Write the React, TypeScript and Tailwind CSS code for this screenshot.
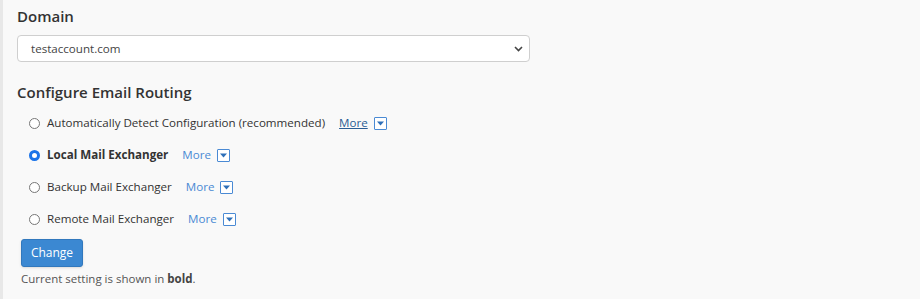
import React from "react";

function MoreIcon() {
  return (
    <span className="inline-flex items-center justify-center w-[13px] h-[13px] border-[1.5px] border-[#4a8ad4] bg-white rounded-[1px] ml-[6px]">
      <svg width="7" height="5" viewBox="0 0 7 5">
        <path d="M0 0.5 L7 0.5 L3.5 4.5 Z" fill="#2d6fb8" />
      </svg>
    </span>
  );
}

const rows = [
  { label: "Automatically Detect Configuration (recommended)", checked: false, dark: true },
  { label: "Local Mail Exchanger", checked: true, dark: false },
  { label: "Backup Mail Exchanger", checked: false, dark: false },
  { label: "Remote Mail Exchanger", checked: false, dark: false },
];

export default function App() {
  return (
    <div
      className="w-[920px] h-[299px] bg-[#f9f9f9] flex text-[#333]"
      style={{ fontFamily: '"Open Sans", sans-serif' }}
    >
      <div className="w-[3px] bg-[#e8e8e8]" />
      <div className="pl-[14px] pt-[5px] flex flex-col">
        <h2 className="text-[15px] font-semibold leading-[22px]">Domain</h2>
        <div className="mt-[8px] w-[513px] h-[27px] bg-white border border-[#cfcfcf] rounded-[4px] flex items-center justify-between pl-[13px] pr-[6px]">
          <span className="text-[11.6px] text-[#444]">testaccount.com</span>
          <svg width="9" height="6" viewBox="0 0 9 6">
            <path d="M1 1 L4.5 4.5 L8 1" stroke="#444" strokeWidth="1.6" fill="none" />
          </svg>
        </div>
        <h2 className="mt-[19px] text-[15px] font-semibold leading-[22px]">Configure Email Routing</h2>
        <div className="mt-[9px] flex flex-col gap-[10px] pl-[12px]">
          {rows.map((r) => (
            <div key={r.label} className="flex items-center h-[22px]">
              <span
                className={
                  r.checked
                    ? "w-[11px] h-[11px] rounded-full border-[3px] border-[#1a73e8] bg-white box-border"
                    : "w-[11px] h-[11px] rounded-full border border-[#777] bg-white box-border"
                }
              />
              <span
                className={
                  "ml-[7px] text-[11.6px] text-[#333] " + (r.checked ? "font-bold" : "")
                }
              >
                {r.label}
              </span>
              <span
                className={
                  r.dark
                    ? "ml-[14px] text-[11.6px] text-[#2a5d94] underline"
                    : "ml-[14px] text-[11.6px] text-[#4a8ad4]"
                }
              >
                More
              </span>
              <MoreIcon />
            </div>
          ))}
        </div>
        <div className="mt-[9px] ml-[4px]">
          <button className="w-[62px] h-[28px] bg-[#3b88d2] text-white text-[12px] rounded-[3px] border border-[#3178bd] shadow-sm">
            Change
          </button>
        </div>
        <p className="mt-[3px] ml-[4px] text-[11.5px] text-[#555]">
          Current setting is shown in <b className="text-[#444]">bold</b>.
        </p>
      </div>
    </div>
  );
}
